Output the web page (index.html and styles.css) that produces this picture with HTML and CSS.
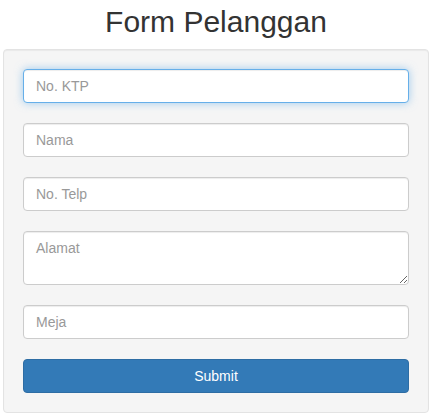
FILE: index.html
```html
<!DOCTYPE html>
<html lang="id">
<head>
    <meta charset="UTF-8">
    <meta name="viewport" content="width=device-width, initial-scale=1.0">
    <title>Form Pelanggan</title>
    <link rel="stylesheet" href="styles.css">
</head>
<body>
    <div class="container">
        <h2 class="title">Form Pelanggan</h2>
        <form class="well">
            <div class="form-group">
                <input type="text" class="form-control" placeholder="No. KTP" autofocus>
            </div>
            <div class="form-group">
                <input type="text" class="form-control" placeholder="Nama">
            </div>
            <div class="form-group">
                <input type="text" class="form-control" placeholder="No. Telp">
            </div>
            <div class="form-group">
                <textarea class="form-control form-area" placeholder="Alamat"></textarea>
            </div>
            <div class="form-group">
                <input type="text" class="form-control" placeholder="Meja">
            </div>
            <button type="submit" class="btn-submit">Submit</button>
        </form>
    </div>
</body>
</html>
```

FILE: styles.css
```css
* {
    box-sizing: border-box;
}
body {
    margin: 0;
    background-color: #fff;
    font-family: "Liberation Sans", Arial, sans-serif;
    font-size: 14px;
    color: #333;
}
.container {
    padding: 0 4px 0 3px;
}
.title {
    margin: 5px 0 11px;
    font-size: 30px;
    font-weight: 500;
    line-height: 33px;
    text-align: center;
    color: #333;
}
.well {
    margin: 0;
    padding: 19px;
    background-color: #f5f5f5;
    border: 1px solid #e3e3e3;
    border-radius: 4px;
    box-shadow: inset 0 1px 1px rgba(0, 0, 0, .05);
}
.form-group {
    margin-bottom: 20px;
}
.form-control {
    display: block;
    width: 100%;
    height: 34px;
    margin: 0;
    padding: 6px 12px;
    font-family: inherit;
    font-size: 14px;
    line-height: 20px;
    color: #555;
    background-color: #fff;
    border: 1px solid #ccc;
    border-radius: 4px;
    box-shadow: inset 0 1px 1px rgba(0, 0, 0, .075);
    outline: 0;
}
.form-control::placeholder {
    color: #999;
    opacity: 1;
}
.form-control:focus {
    border-color: #66afe9;
    box-shadow: inset 0 1px 1px rgba(0, 0, 0, .075), 0 0 8px rgba(102, 175, 233, .6);
}
.form-area {
    height: 54px;
    resize: vertical;
}
.btn-submit {
    display: block;
    width: 100%;
    height: 34px;
    padding: 6px 12px;
    font-family: inherit;
    font-size: 14px;
    line-height: 20px;
    color: #fff;
    background-color: #337ab7;
    border: 1px solid #2e6da4;
    border-radius: 4px;
    cursor: pointer;
}
.btn-submit:hover {
    background-color: #286090;
}
```
